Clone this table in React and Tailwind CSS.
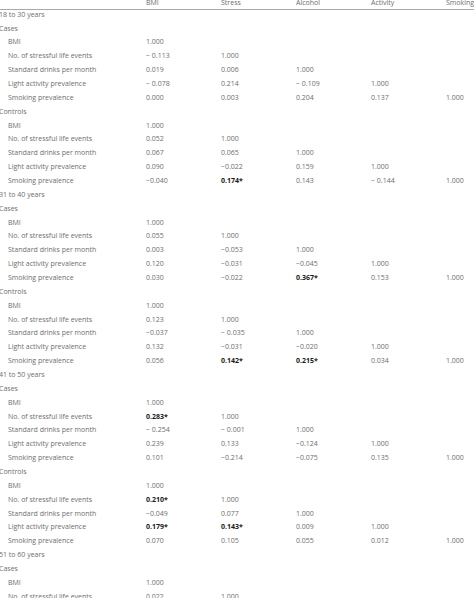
const GROUPS = [
  {
    age: '18 to 30 years',
    cases: [
      ['1.000'],
      ['\u2212 0.113', '1.000'],
      ['0.019', '0.006', '1.000'],
      ['\u2212 0.078', '0.214', '\u2212 0.109', '1.000'],
      ['0.000', '0.003', '0.204', '0.137', '1.000'],
    ],
    controls: [
      ['1.000'],
      ['0.052', '1.000'],
      ['0.067', '0.065', '1.000'],
      ['0.090', '\u22120.022', '0.159', '1.000'],
      ['\u22120.040', '*0.174*', '0.143', '\u2212 0.144', '1.000'],
    ],
  },
  {
    age: '31 to 40 years',
    cases: [
      ['1.000'],
      ['0.055', '1.000'],
      ['0.003', '\u22120.053', '1.000'],
      ['0.120', '\u22120.031', '\u22120.045', '1.000'],
      ['0.030', '\u22120.022', '*0.367*', '0.153', '1.000'],
    ],
    controls: [
      ['1.000'],
      ['0.123', '1.000'],
      ['\u22120.037', '\u2212 0.035', '1.000'],
      ['0.132', '\u22120.031', '\u22120.020', '1.000'],
      ['0.056', '*0.142*', '*0.215*', '0.034', '1.000'],
    ],
  },
  {
    age: '41 to 50 years',
    cases: [
      ['1.000'],
      ['*0.283*', '1.000'],
      ['\u2212 0.254', '\u2212 0.001', '1.000'],
      ['0.239', '0.133', '\u22120.124', '1.000'],
      ['0.101', '\u22120.214', '\u22120.075', '0.135', '1.000'],
    ],
    controls: [
      ['1.000'],
      ['*0.210*', '1.000'],
      ['\u22120.049', '0.077', '1.000'],
      ['*0.179*', '*0.143*', '0.009', '1.000'],
      ['0.070', '0.105', '0.055', '0.012', '1.000'],
    ],
  },
  {
    age: '51 to 60 years',
    cases: [['1.000'], ['0.022', '1.000']],
    controls: [],
  },
];

const LABELS = [
  'BMI',
  'No. of stressful life events',
  'Standard drinks per month',
  'Light activity prevalence',
  'Smoking prevalence',
];

const HEAD = ['BMI', 'Stress', 'Alcohol', 'Activity', 'Smoking'];

function Cell({ v }) {
  if (!v) return <div className="w-[75px] shrink-0" />;
  const bold = v.startsWith('*');
  const text = bold ? v.slice(1) : v;
  return (
    <div className={`w-[75px] shrink-0 ${bold ? 'font-bold text-[#1a1a1a]' : ''}`}>{text}</div>
  );
}

function Row({ label, values = [], indent }) {
  return (
    <div className="flex h-[13.86px] items-center whitespace-nowrap">
      <div className={`w-[146px] shrink-0 ${indent ? 'pl-[8px]' : '-ml-[1px]'}`}>{label}</div>
      {[0, 1, 2, 3, 4].map((i) => (
        <Cell key={i} v={values[i]} />
      ))}
    </div>
  );
}

export default function App() {
  return (
    <div
      className="w-[474px] h-[598px] overflow-hidden bg-white text-[7px] text-[#6e6e6e]"
      style={{ fontFamily: '"Open Sans", "Liberation Sans", sans-serif' }}
    >
      <div className="flex h-[10px] border-b border-[#a8a8a8] leading-[6px] whitespace-nowrap">
        <div className="w-[146px] shrink-0" />
        {HEAD.map((h) => (
          <div key={h} className="w-[75px] shrink-0">{h}</div>
        ))}
      </div>
      <div className="-mt-[2px]">
        {GROUPS.map((g) => (
          <div key={g.age}>
            <Row label={g.age} />
            <Row label="Cases" />
            {g.cases.map((vals, i) => (
              <Row key={'c' + i} label={LABELS[i]} values={vals} indent />
            ))}
            {g.controls.length > 0 && <Row label="Controls" />}
            {g.controls.map((vals, i) => (
              <Row key={'k' + i} label={LABELS[i]} values={vals} indent />
            ))}
          </div>
        ))}
      </div>
    </div>
  );
}
